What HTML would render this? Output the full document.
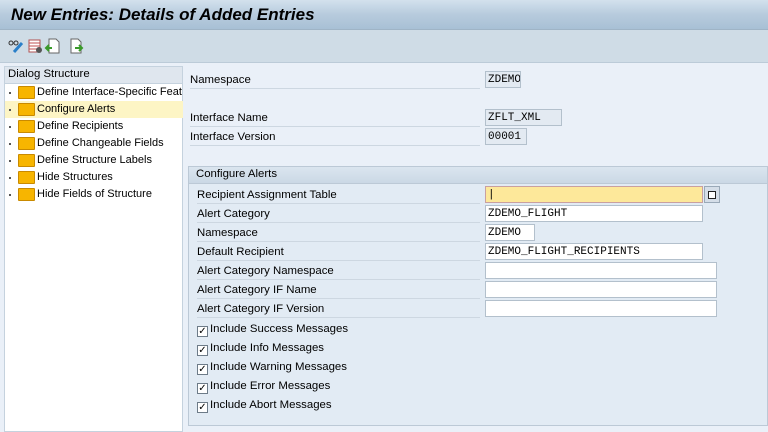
<!DOCTYPE html>
<html><head><meta charset="utf-8"><style>
*{margin:0;padding:0;box-sizing:border-box}
body{width:768px;height:432px;overflow:hidden;background:#eaf0f8;font-family:"Liberation Sans",sans-serif;font-size:11.4px;color:#000;position:relative}
.a{position:absolute}
#title{left:0;top:0;width:768px;height:30px;background:linear-gradient(#d3e1ed,#b7cbdd 50%,#a8c0d5);border-bottom:1px solid #9fb4c6}
#title span{position:absolute;left:11px;top:5px;font:italic bold 17px "Liberation Sans",sans-serif;color:#000}
#tb{left:0;top:30px;width:768px;height:33px;background:#cfdce6;border-bottom:1px solid #bccbd8}
#left{left:4px;top:66px;width:179px;height:366px;background:#fff;border:1px solid #c5d2de;font-size:11px}
#left .h{height:17px;background:#dfe6ee;border-bottom:1px solid #c5d2de;padding:1px 0 0 3px;font-size:11.4px}
.it{position:absolute;left:0;height:17px;width:178px;padding-left:32px;line-height:17px;white-space:nowrap}
.it:before{content:"";position:absolute;left:4px;top:8px;width:2px;height:2px;background:#555}
.fold{position:absolute;left:13px;top:2px;width:17px;height:13px;background:#f7b500;border:1px solid #c98a00;border-radius:1px}
.lab{position:absolute;border-bottom:1px solid #cdd7e1;height:18px;line-height:17px;padding-top:1px;white-space:nowrap}
.inp{position:absolute;height:17px;border:1px solid #b3c0cc;background:#fff;font:11px "Liberation Mono",monospace;padding:2px 2px;line-height:13px;overflow:hidden;white-space:nowrap}
.ro{background:#e3eaf2}
#grp{left:188px;top:166px;width:580px;height:260px;border:1px solid #bcc9d6;background:#e2ebf4}
#grp .gh{height:17px;background:linear-gradient(#dbe5ef,#cbd8e5);border-bottom:1px solid #bcc9d6;padding:1px 0 0 7px}
.cb{position:absolute;left:197px;white-space:nowrap}
.cb i{display:inline-block;width:11px;height:11px;border:1px solid #6d7b88;background:#fff;vertical-align:-2px;margin-right:2px;font-style:normal;font-size:10px;line-height:9px;text-align:center}
</style></head><body>
<div id="title" class="a"><span>New Entries: Details of Added Entries</span></div>
<div id="tb" class="a">
<svg class="a" style="left:8px;top:8px" width="80" height="16">
<circle cx="3" cy="5" r="2" fill="none" stroke="#333"/><circle cx="8" cy="5" r="2" fill="none" stroke="#333"/>
<path d="M6 14 L14 5" stroke="#2a7fc9" stroke-width="3"/>
<rect x="21" y="2" width="11" height="12" fill="#fff" stroke="#b05050"/><path d="M21 5h11M21 8h11M21 11h11" stroke="#c05050"/><circle cx="31" cy="12" r="3" fill="#555"/>
<path d="M41 1h7l3 3v11h-10z" fill="#fff" stroke="#666"/><path d="M38 10h6M41 7l-3 3 3 3" stroke="#3a9a2a" stroke-width="2" fill="none"/>
<path d="M63 1h7l3 3v11h-10z" fill="#fff" stroke="#666"/><path d="M67 10h7M71 7l3 3-3 3" stroke="#3a9a2a" stroke-width="2" fill="none"/>
</svg></div>
<div id="left" class="a"><div class="h">Dialog Structure</div>
<div class="it" style="top:17px"><span class="fold"></span>Define Interface-Specific Feat</div>
<div class="it" style="top:34px;background:#fdf5c5"><span class="fold"></span>Configure Alerts</div>
<div class="it" style="top:51px"><span class="fold"></span>Define Recipients</div>
<div class="it" style="top:68px"><span class="fold"></span>Define Changeable Fields</div>
<div class="it" style="top:85px"><span class="fold"></span>Define Structure Labels</div>
<div class="it" style="top:102px"><span class="fold"></span>Hide Structures</div>
<div class="it" style="top:119px"><span class="fold"></span>Hide Fields of Structure</div>
</div>
<div class="lab" style="left:190px;top:71px;width:290px">Namespace</div>
<div class="inp ro" style="left:485px;top:71px;width:36px">ZDEMO</div>
<div class="lab" style="left:190px;top:109px;width:290px">Interface Name</div>
<div class="inp ro" style="left:485px;top:109px;width:77px">ZFLT_XML</div>
<div class="lab" style="left:190px;top:128px;width:290px">Interface Version</div>
<div class="inp ro" style="left:485px;top:128px;width:42px">00001</div>
<div id="grp" class="a"><div class="gh">Configure Alerts</div></div>
<div class="lab" style="left:197px;top:186px;width:283px">Recipient Assignment Table</div>
<div class="lab" style="left:197px;top:205px;width:283px">Alert Category</div>
<div class="lab" style="left:197px;top:224px;width:283px">Namespace</div>
<div class="lab" style="left:197px;top:243px;width:283px">Default Recipient</div>
<div class="lab" style="left:197px;top:262px;width:283px">Alert Category Namespace</div>
<div class="lab" style="left:197px;top:281px;width:283px">Alert Category IF Name</div>
<div class="lab" style="left:197px;top:300px;width:283px">Alert Category IF Version</div>
<div class="inp" style="left:485px;top:186px;width:218px;background:#fde89a;border-color:#c9a0a0">|</div>
<div class="a" style="left:704px;top:186px;width:16px;height:17px;background:#d5dee8;border:1px solid #9aa9b8"><div class="a" style="left:3px;top:4px;width:8px;height:8px;border:1px solid #222;background:#fff"></div></div>
<div class="inp" style="left:485px;top:205px;width:218px">ZDEMO_FLIGHT</div>
<div class="inp" style="left:485px;top:224px;width:50px">ZDEMO</div>
<div class="inp" style="left:485px;top:243px;width:218px">ZDEMO_FLIGHT_RECIPIENTS</div>
<div class="inp" style="left:485px;top:262px;width:232px"></div>
<div class="inp" style="left:485px;top:281px;width:232px"></div>
<div class="inp" style="left:485px;top:300px;width:232px"></div>
<div class="cb" style="top:323px"><i>✓</i>Include Success Messages</div>
<div class="cb" style="top:342px"><i>✓</i>Include Info Messages</div>
<div class="cb" style="top:361px"><i>✓</i>Include Warning Messages</div>
<div class="cb" style="top:380px"><i>✓</i>Include Error Messages</div>
<div class="cb" style="top:399px"><i>✓</i>Include Abort Messages</div>
</body></html>
